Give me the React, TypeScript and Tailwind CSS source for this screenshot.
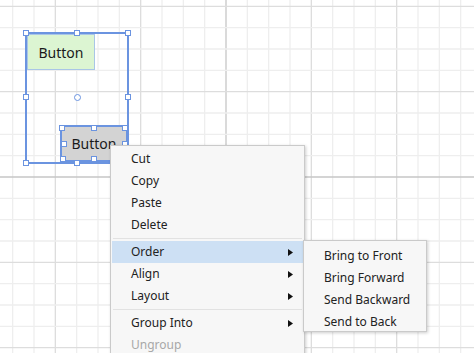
import React from "react";

const CELL = 64 / 3;

function Grid() {
  const vs: React.ReactNode[] = [];
  const hs: React.ReactNode[] = [];
  for (let k = -11; k <= 12; k++) {
    const x = 226 + k * CELL;
    if (x < -1 || x > 475) continue;
    const col = k === 0 ? "#c6c6c6" : k % 4 === 0 ? "#dddddd" : "#eeeeee";
    vs.push(<line key={"v" + k} x1={x} y1={0} x2={x} y2={353} stroke={col} strokeWidth={1.3} />);
  }
  for (let k = -9; k <= 9; k++) {
    const y = 177 + k * CELL;
    if (y < -1 || y > 354) continue;
    const col = k === 0 ? "#c6c6c6" : k % 4 === 0 ? "#dddddd" : "#eeeeee";
    hs.push(<line key={"h" + k} x1={0} y1={y} x2={474} y2={y} stroke={col} strokeWidth={1.3} />);
  }
  return (
    <svg className="absolute left-0 top-0" width={474} height={353}>
      {vs}
      {hs}
    </svg>
  );
}

function Handle({ x, y }: { x: number; y: number }) {
  return (
    <div
      className="absolute w-[6px] h-[6px] bg-white border border-[#6b94e0]"
      style={{ left: x - 3, top: y - 3 }}
    />
  );
}

function Arrow() {
  return (
    <svg width="5" height="7" viewBox="0 0 5 7" className="mr-[10px]">
      <path d="M0 0 L5 3.5 L0 7 Z" fill="#111" />
    </svg>
  );
}

function Item({ label, arrow, active, disabled }: { label: string; arrow?: boolean; active?: boolean; disabled?: boolean }) {
  return (
    <div
      className={
        "flex items-center justify-between h-[22px] pl-[19px] mx-[1px] " +
        (active ? "bg-[#cde0f4] " : "") +
        (disabled ? "text-[#a8a8a8]" : "text-[#222]")
      }
    >
      <span>{label}</span>
      {arrow && <Arrow />}
    </div>
  );
}

function Sep() {
  return (
    <div className="h-[5px] flex items-center mx-[2px]">
      <div className="h-px w-full bg-[#e2e2e2]" />
    </div>
  );
}

export default function App() {
  const font = { fontFamily: '"Noto Sans", "Open Sans", sans-serif' };
  return (
    <div className="relative w-[474px] h-[353px] overflow-hidden bg-white" style={font}>
      <Grid />

      {/* green button */}
      <div className="absolute left-[27px] top-[34px] w-[68px] h-[36px] bg-[#dcf5d2] border border-[#a9c6e6] flex items-center justify-center text-[14px] text-[#1a1a1a]">
        Button
      </div>

      {/* gray button */}
      <div className="absolute left-[60px] top-[125px] w-[68px] h-[37px] bg-[#d3d3d3] border-2 border-[#6b94e0] flex items-center justify-center text-[14px] text-[#1a1a1a]">
        Button
      </div>

      {/* group selection outline */}
      <div className="absolute left-[25px] top-[32px] w-[104px] h-[132px] border-2 border-[#6b94e0]" />

      <Handle x={26} y={33} />
      <Handle x={77} y={33} />
      <Handle x={128} y={33} />
      <Handle x={26} y={97} />
      <Handle x={128} y={97} />
      <Handle x={26} y={163} />
      <Handle x={77} y={163} />
      <div className="absolute left-[74px] top-[94px] w-[7px] h-[7px] rounded-full bg-white border border-[#6b94e0]" />

      <Handle x={62} y={128} />
      <Handle x={94} y={128} />
      <Handle x={125} y={128} />
      <Handle x={64} y={144} />
      <Handle x={125} y={144} />
      <Handle x={63} y={159} />
      <Handle x={94} y={159} />

      {/* context menu */}
      <div className="absolute left-[110px] top-[145px] w-[195px] h-[220px] bg-[#f7f7f7] border border-[#cacaca] shadow-[1px_1px_3px_rgba(0,0,0,0.2)] pt-[2px] text-[12px]">
        <Item label="Cut" />
        <Item label="Copy" />
        <Item label="Paste" />
        <Item label="Delete" />
        <Sep />
        <Item label="Order" arrow active />
        <Item label="Align" arrow />
        <Item label="Layout" arrow />
        <Sep />
        <Item label="Group Into" arrow />
        <Item label="Ungroup" disabled />
      </div>

      {/* submenu */}
      <div className="absolute left-[303px] top-[240px] w-[124px] h-[92px] bg-[#f7f7f7] border border-[#cacaca] shadow-[1px_1px_3px_rgba(0,0,0,0.2)] pt-[4px] text-[12px]">
        <Item label="Bring to Front" />
        <Item label="Bring Forward" />
        <Item label="Send Backward" />
        <Item label="Send to Back" />
      </div>
    </div>
  );
}
